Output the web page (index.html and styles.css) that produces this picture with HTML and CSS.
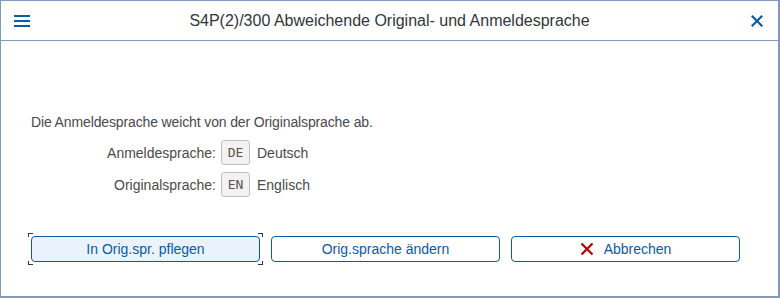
FILE: index.html
```html
<!DOCTYPE html>
<html lang="de">
<head>
  <meta charset="UTF-8">
  <meta name="viewport" content="width=device-width, initial-scale=1.0">
  <title>Abweichende Original- und Anmeldesprache</title>
  <link rel="stylesheet" href="styles.css">
</head>
<body>
  <div class="dialog">
    <div class="dialog-header">
      <button class="icon-btn" title="Menü">
        <svg width="16" height="12" viewBox="0 0 16 12"><rect x="0" y="0" width="16" height="2" fill="#0a5ba8"/><rect x="0" y="5" width="16" height="2" fill="#0a5ba8"/><rect x="0" y="10" width="16" height="2" fill="#0a5ba8"/></svg>
      </button>
      <div class="dialog-title">S4P(2)/300 Abweichende Original- und Anmeldesprache</div>
      <button class="icon-btn" title="Schließen">
        <svg width="12" height="12" viewBox="0 0 12 12"><path d="M1.5 1.5 L10.5 10.5 M10.5 1.5 L1.5 10.5" stroke="#0a5ba8" stroke-width="2.2" stroke-linecap="square"/></svg>
      </button>
    </div>

    <div class="dialog-body">
      <p class="message">Die Anmeldesprache weicht von der Originalsprache ab.</p>
      <div class="lang-grid">
        <span class="lang-label">Anmeldesprache:</span>
        <span class="lang-key">DE</span>
        <span class="lang-name">Deutsch</span>
        <span class="lang-label">Originalsprache:</span>
        <span class="lang-key">EN</span>
        <span class="lang-name">Englisch</span>
      </div>

      <div class="actions">
        <button class="btn btn-focus">In Orig.spr. pflegen</button>
        <button class="btn">Orig.sprache ändern</button>
        <button class="btn">
          <svg width="14" height="14" viewBox="0 0 14 14"><path d="M1.5 1.5 L12.5 12.5 M12.5 1.5 L1.5 12.5" stroke="#bb0000" stroke-width="2.2"/></svg>
          Abbrechen
        </button>
      </div>
    </div>
  </div>
</body>
</html>
```

FILE: styles.css
```css
body {
  margin: 0;
  font-family: "Liberation Sans", Arial, sans-serif;
  background-color: #fff;
  color: #32363a;
}
.dialog {
  width: 780px;
  height: 298px;
  box-sizing: border-box;
  border: 1px solid #7f9cbc;
  border-bottom-width: 2px;
  border-right-width: 2px;
  background-color: #fff;
}
.dialog-header {
  height: 39px;
  border-bottom: 1px solid #7f9cbc;
  display: flex;
  align-items: center;
  padding: 0 13px 0 13px;
}
.dialog-title {
  flex: 1;
  text-align: center;
  font-size: 16px;
  color: #32363a;
}
.icon-btn {
  background: none;
  border: none;
  padding: 0;
  width: 16px;
  height: 16px;
  display: flex;
  align-items: center;
  justify-content: center;
  cursor: pointer;
}
.dialog-body {
  padding: 71px 0 0 30px;
}
.message {
  margin: 0;
  font-size: 14px;
  line-height: 20px;
  letter-spacing: -0.13px;
  color: #4a4a4a;
}
.lang-grid {
  display: grid;
  grid-template-columns: 185px 29px auto;
  grid-auto-rows: 25px;
  column-gap: 5px;
  row-gap: 7px;
  align-items: center;
  margin-top: 8px;
  font-size: 14px;
  color: #4a4a4a;
}
.lang-label {
  text-align: right;
}
.lang-key {
  box-sizing: border-box;
  height: 25px;
  border: 1px solid #bfbfbf;
  border-radius: 3px;
  background-color: #f2f2f2;
  font-family: "DejaVu Sans Mono", monospace;
  font-size: 13px;
  color: #555;
  display: flex;
  align-items: center;
  justify-content: center;
}
.lang-name {
  padding-left: 2px;
}
.actions {
  display: flex;
  gap: 11px;
  margin-top: 39px;
}
.btn {
  width: 229px;
  height: 26px;
  border: 1px solid #0a5ba8;
  border-radius: 4px;
  background-color: #fff;
  color: #0b5aa7;
  font-family: "Liberation Sans", Arial, sans-serif;
  font-size: 14px;
  display: flex;
  align-items: center;
  justify-content: center;
  gap: 10px;
  cursor: pointer;
  padding: 0;
}
.btn-focus {
  position: relative;
  background-color: #eaf3fc;
}
.btn-focus::before,
.btn-focus::after {
  content: "";
  position: absolute;
  top: -4px;
  bottom: -4px;
  width: 4px;
  border: 1px solid #32363a;
}
.btn-focus::before {
  left: -4px;
  border-right: none;
  border-image: linear-gradient(to bottom, #32363a 0, #32363a 4px, transparent 4px, transparent calc(100% - 4px), #32363a calc(100% - 4px)) 1;
}
.btn-focus::after {
  right: -4px;
  border-left: none;
  border-image: linear-gradient(to bottom, #32363a 0, #32363a 4px, transparent 4px, transparent calc(100% - 4px), #32363a calc(100% - 4px)) 1;
}
```
